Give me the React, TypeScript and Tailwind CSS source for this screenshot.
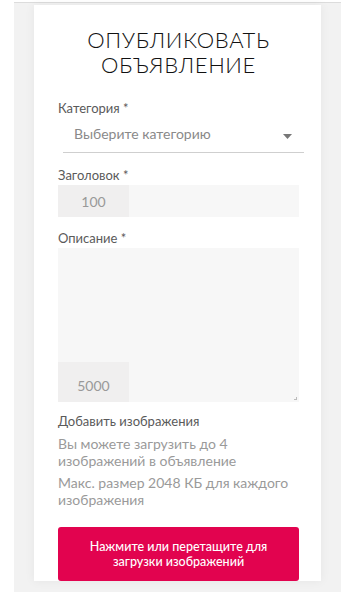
const font = { fontFamily: "Lato, 'Noto Sans', 'Liberation Sans', sans-serif" };

export default function App() {
  return (
    <div className="h-[592px] overflow-hidden bg-white px-[14px]" style={font}>
      <div className="flex h-full flex-col bg-[#f2f2f2]">
        <div className="h-[3px] shrink-0 border-b border-[#dcdcdc] bg-white" />
        <div className="flex min-h-0 flex-1 flex-col px-5 pt-[2px] pb-[11px]">
          <div className="flex min-h-0 flex-1 flex-col overflow-hidden bg-white pt-[22px] pr-[22px] pl-6 shadow-[0_0_10px_rgba(0,0,0,0.06)] [&>*]:shrink-0">
            <h1 className="text-center text-[22px] leading-[25px] font-light tracking-[0.6px] text-[#111]">
              ОПУБЛИКОВАТЬ
              <br />
              ОБЪЯВЛЕНИЕ
            </h1>

            <label className="mt-[23px] text-[13px] leading-4 text-[#5a5a5a]">Категория *</label>
            <div className="mt-[9px] mr-[-5px] ml-[5px] flex items-center justify-between border-b border-[#cfcfcf] pb-[9px] pl-[11px] pr-[12px]">
              <span className="text-[14px] leading-[18px] text-[#8a8a8a]">Выберите категорию</span>
              <svg width="9" height="5" viewBox="0 0 9 5" className="mt-[4px]">
                <path d="M0 0h9L4.5 5z" fill="#777" />
              </svg>
            </div>

            <label className="mt-[14px] text-[13px] leading-4 text-[#5a5a5a]">Заголовок *</label>
            <div className="mt-[2px] flex h-[32px] bg-[#f7f7f7]">
              <div className="flex w-[71px] items-center justify-center bg-[#f0efef] text-[14px] text-[#999]">100</div>
              <input className="min-w-0 flex-1 bg-transparent outline-none" />
            </div>

            <label className="mt-[13px] text-[13px] leading-4 text-[#5a5a5a]">Описание *</label>
            <div className="relative mt-[2px] flex h-[154px] items-end bg-[#f7f7f7]">
              <div className="flex h-[40px] w-[71px] items-center justify-center bg-[#f0efef] pt-[6px] text-[14px] text-[#999]">5000</div>
              <span className="absolute right-[2px] bottom-[2px] h-[3px] w-[3px] border-r border-b border-[#bbb]" />
            </div>

            <p className="mt-[11px] text-[13px] leading-4 text-[#5a5a5a]">Добавить изображения</p>
            <p className="mt-[6px] text-[14px] leading-[17px] text-[#9a9a9a]">
              Вы можете загрузить до 4 изображений в объявление
            </p>
            <p className="mt-[5px] text-[14px] leading-[17px] text-[#9a9a9a]">
              Макс. размер 2048 КБ для каждого изображения
            </p>

            <button className="mt-[19px] flex h-[54px] items-center justify-center rounded-[3px] bg-[#e2034f] px-6 text-center text-[12.5px] leading-[15px] font-medium text-white">
              Нажмите или перетащите для
              <br />
              загрузки изображений
            </button>
          </div>
        </div>
      </div>
    </div>
  );
}
